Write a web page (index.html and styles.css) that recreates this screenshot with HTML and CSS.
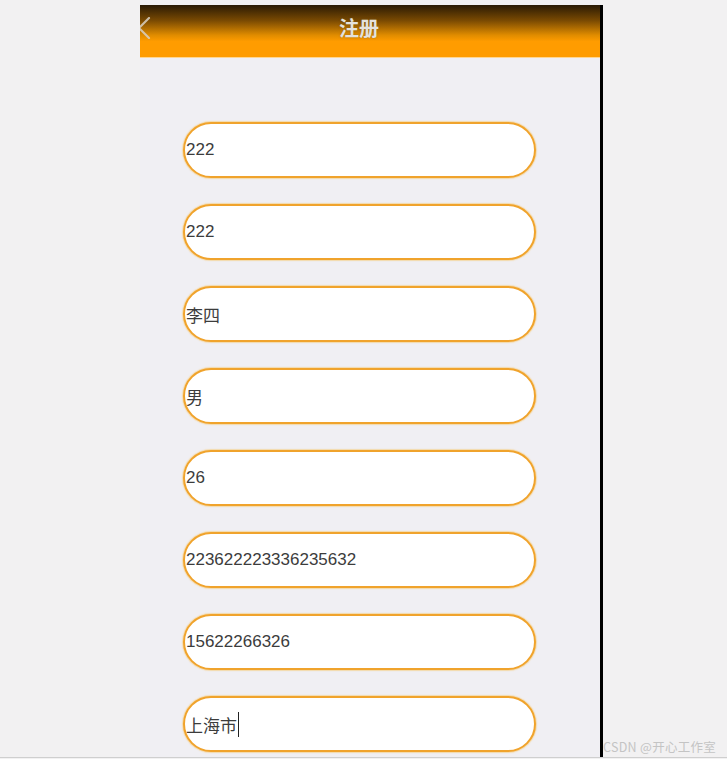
FILE: index.html
```html
<!DOCTYPE html>
<html lang="zh">
<head>
<meta charset="utf-8">
<title>注册</title>
<link rel="stylesheet" href="styles.css">
</head>
<body>
<div class="frame">
  <div class="screen">
    <header class="topbar">
      <div class="back">
        <svg width="14" height="22" viewBox="0 0 14 22"><path d="M12 1 L2 11 L12 21" fill="none" stroke="#d8d0c4" stroke-width="2.2" stroke-linecap="round" stroke-linejoin="round" opacity="0.85"/></svg>
      </div>
      <h1 class="title">注册</h1>
      <div></div>
    </header>
    <form class="form">
      <div class="field"><span class="val">222</span></div>
      <div class="field"><span class="val">222</span></div>
      <div class="field"><span class="val">李四</span></div>
      <div class="field"><span class="val">男</span></div>
      <div class="field"><span class="val">26</span></div>
      <div class="field"><span class="val">223622223336235632</span></div>
      <div class="field"><span class="val">15622266326</span></div>
      <div class="field"><span class="val caret">上海市</span></div>
    </form>
  </div>
</div>
<div class="bottomline"></div>
<div class="watermark">CSDN @开心工作室</div>
</body>
</html>
```
FILE: styles.css
```css
html, body {
  margin: 0;
  padding: 0;
}
body {
  background: #f2f1f2;
  font-family: "Liberation Sans", Arial, "Noto Sans CJK SC", sans-serif;
  height: 759px;
  overflow: hidden;
  position: relative;
}
.frame {
  margin-left: 140px;
  margin-top: 5px;
  width: 460px;
  height: 752px;
  border-right: 3px solid #000;
  overflow: hidden;
  background: #f0eff3;
}
.screen {
  width: 482px;
  margin-left: -22px;
}
.topbar {
  height: 52px;
  display: grid;
  grid-template-columns: 1fr auto 1fr;
  align-items: center;
  background: linear-gradient(to bottom, #2a1a04 0%, #7a4a02 30%, #e08c00 58%, #ff9c00 70%, #ff9c00 100%);
  border-bottom: 1px solid #ffd692;
}
.back {
  padding-left: 19px;
  display: flex;
  align-items: center;
  height: 22px;
  margin-top: -6px;
}
.back svg { display: block; }
.title {
  margin: -7px 0 0 0;
  font-size: 20px;
  font-weight: bold;
  color: #e4e2de;
  text-shadow: 0 0 2px rgba(120, 90, 40, 0.6);
  font-family: "Noto Sans CJK SC", "Liberation Sans", sans-serif;
}
.form {
  padding-top: 64px;
  display: flex;
  flex-direction: column;
  align-items: center;
  gap: 26px;
  padding-left: 1px;
}
.field {
  box-sizing: border-box;
  width: 353px;
  height: 56px;
  border: 2px solid #f0a32c;
  box-shadow: 0 0 1px 1px rgba(248, 200, 110, 0.55);
  border-radius: 28px;
  background: #fff;
  display: flex;
  align-items: center;
  padding-left: 1px;
}
.val {
  font-size: 17px;
  color: #3c3c3c;
  font-family: "Liberation Sans", Arial, "Noto Sans CJK SC", sans-serif;
}
.caret {
  border-right: 1px solid #222;
  padding-right: 1px;
}
.bottomline {
  height: 1px;
  background: #cfcfcf;
}
.watermark {
  position: absolute;
  left: 603px;
  top: 737px;
  font-size: 12.5px;
  color: #c4c4c4;
  font-family: "Noto Sans CJK SC", "Liberation Sans", sans-serif;
  letter-spacing: 0.3px;
}
```
